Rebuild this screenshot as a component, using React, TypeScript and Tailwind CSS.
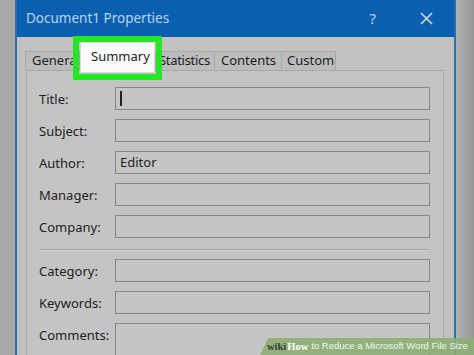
import React from 'react';

const font = { fontFamily: '"Noto Sans", "Open Sans", Arial, sans-serif' };

const Field = ({ label, value, cursor, tall }: { label: string; value?: string; cursor?: boolean; tall?: boolean }) => (
  <div className="flex items-start">
    <div className="w-[76px] shrink-0 pt-[3px] text-[13px] text-[#1e1e1e]">{label}</div>
    <div
      className={`flex-1 border-[1.5px] border-[#858585] bg-[#c5c5c5] px-[4px] text-[13px] text-[#1e1e1e] flex items-center ${tall ? 'h-[60px] items-start' : 'h-[23px]'}`}
    >
      {cursor && <span className="block w-[2px] h-[15px] bg-[#222]" />}
      {value}
    </div>
  </div>
);

export default function App() {
  return (
    <div className="relative w-[474px] h-[355px] overflow-hidden flex bg-[#a6a6a6]" style={font}>
      <div className="w-[15px] shrink-0 bg-[#a8a8a8]" />
      <div className="w-[441px] shrink-0 flex flex-col border-x-2 border-[#2f6ea8] bg-[#c2c2c2]">
        <div className="h-[37px] shrink-0 bg-[#0b5fb0] flex items-center pl-[9px] pr-[20px] text-[#bcd4ee]">
          <span className="text-[13.5px]">Document1 Properties</span>
          <span className="ml-auto text-[15px] mr-[44px]">?</span>
          <svg width="13" height="13" viewBox="0 0 13 13" className="mr-[1px]">
            <path d="M1 1L12 12M12 1L1 12" stroke="#c8dcf2" strokeWidth="1.6" />
          </svg>
        </div>
        <div className="flex-1 pl-[8px] pr-[10px] pt-[14px] flex flex-col">
          <div className="flex items-end h-[19px] text-[13px] text-[#1e1e1e]">
            <div className="w-[55px] h-[19px] border border-b-0 border-[#a9a9a9] bg-[#bdbdbd] pl-[6px] leading-[17px]">General</div>
            <div className="w-[75px] h-[31px] -mb-[3px] bg-[#fbfbfb] border border-[#d8d8d8] pl-[10px] pt-[4px] relative z-10">Summary</div>
            <div className="w-[60px] h-[19px] border border-b-0 border-[#a9a9a9] bg-[#bdbdbd] pl-[3px] leading-[17px] tracking-[-0.3px]">Statistics</div>
            <div className="w-[67px] h-[19px] border border-b-0 border-l-0 border-[#a9a9a9] bg-[#bdbdbd] pl-[6px] leading-[17px]">Contents</div>
            <div className="w-[54px] h-[19px] border border-b-0 border-l-0 border-[#a9a9a9] bg-[#bdbdbd] pl-[5px] leading-[17px]">Custom</div>
          </div>
          <div className="flex-1 ml-[1px] border border-[#a9a9a9] bg-[#c4c4c4] pl-[12px] pr-[13px] pt-[16px] flex flex-col gap-[9px]">
            <Field label="Title:" cursor />
            <Field label="Subject:" />
            <Field label="Author:" value="Editor" />
            <Field label="Manager:" />
            <Field label="Company:" />
            <div className="mt-[2px] -mb-[1px] ml-[1px] h-[2px] border-t border-[#a6a6a6] border-b border-b-[#d0d0d0]" />
            <Field label="Category:" />
            <Field label="Keywords:" />
            <Field label="Comments:" tall />
          </div>
        </div>
      </div>
      <div className="flex-1 bg-gradient-to-r from-[#b4b4b4] to-[#979797]" />

      {/* green highlight around the Summary tab */}
      <div className="absolute left-[73px] top-[36px] w-[89px] h-[44px] border-[6px] border-[#25e525] z-20" />

      {/* watermark */}
      <div
        className="absolute right-0 bottom-0 w-[214px] h-[17px] bg-[#8cae74]/90 flex items-center pl-[7px] gap-[1px] text-[9.5px] whitespace-nowrap z-30"
        style={{ clipPath: 'polygon(8px 0, 100% 0, 100% 100%, 0 100%)' }}
      >
        <span className="font-bold text-[10.5px] text-[#3c3c3c]" style={{ fontFamily: '"Liberation Serif", serif' }}>wiki</span>
        <span className="font-bold text-[10.5px] text-white" style={{ fontFamily: '"Liberation Serif", serif' }}>How</span>
        <span className="text-[#f2f6ee] ml-[2px]" style={{ fontFamily: '"Liberation Sans", Arial, sans-serif' }}>to Reduce a Microsoft Word File Size</span>
      </div>
    </div>
  );
}
